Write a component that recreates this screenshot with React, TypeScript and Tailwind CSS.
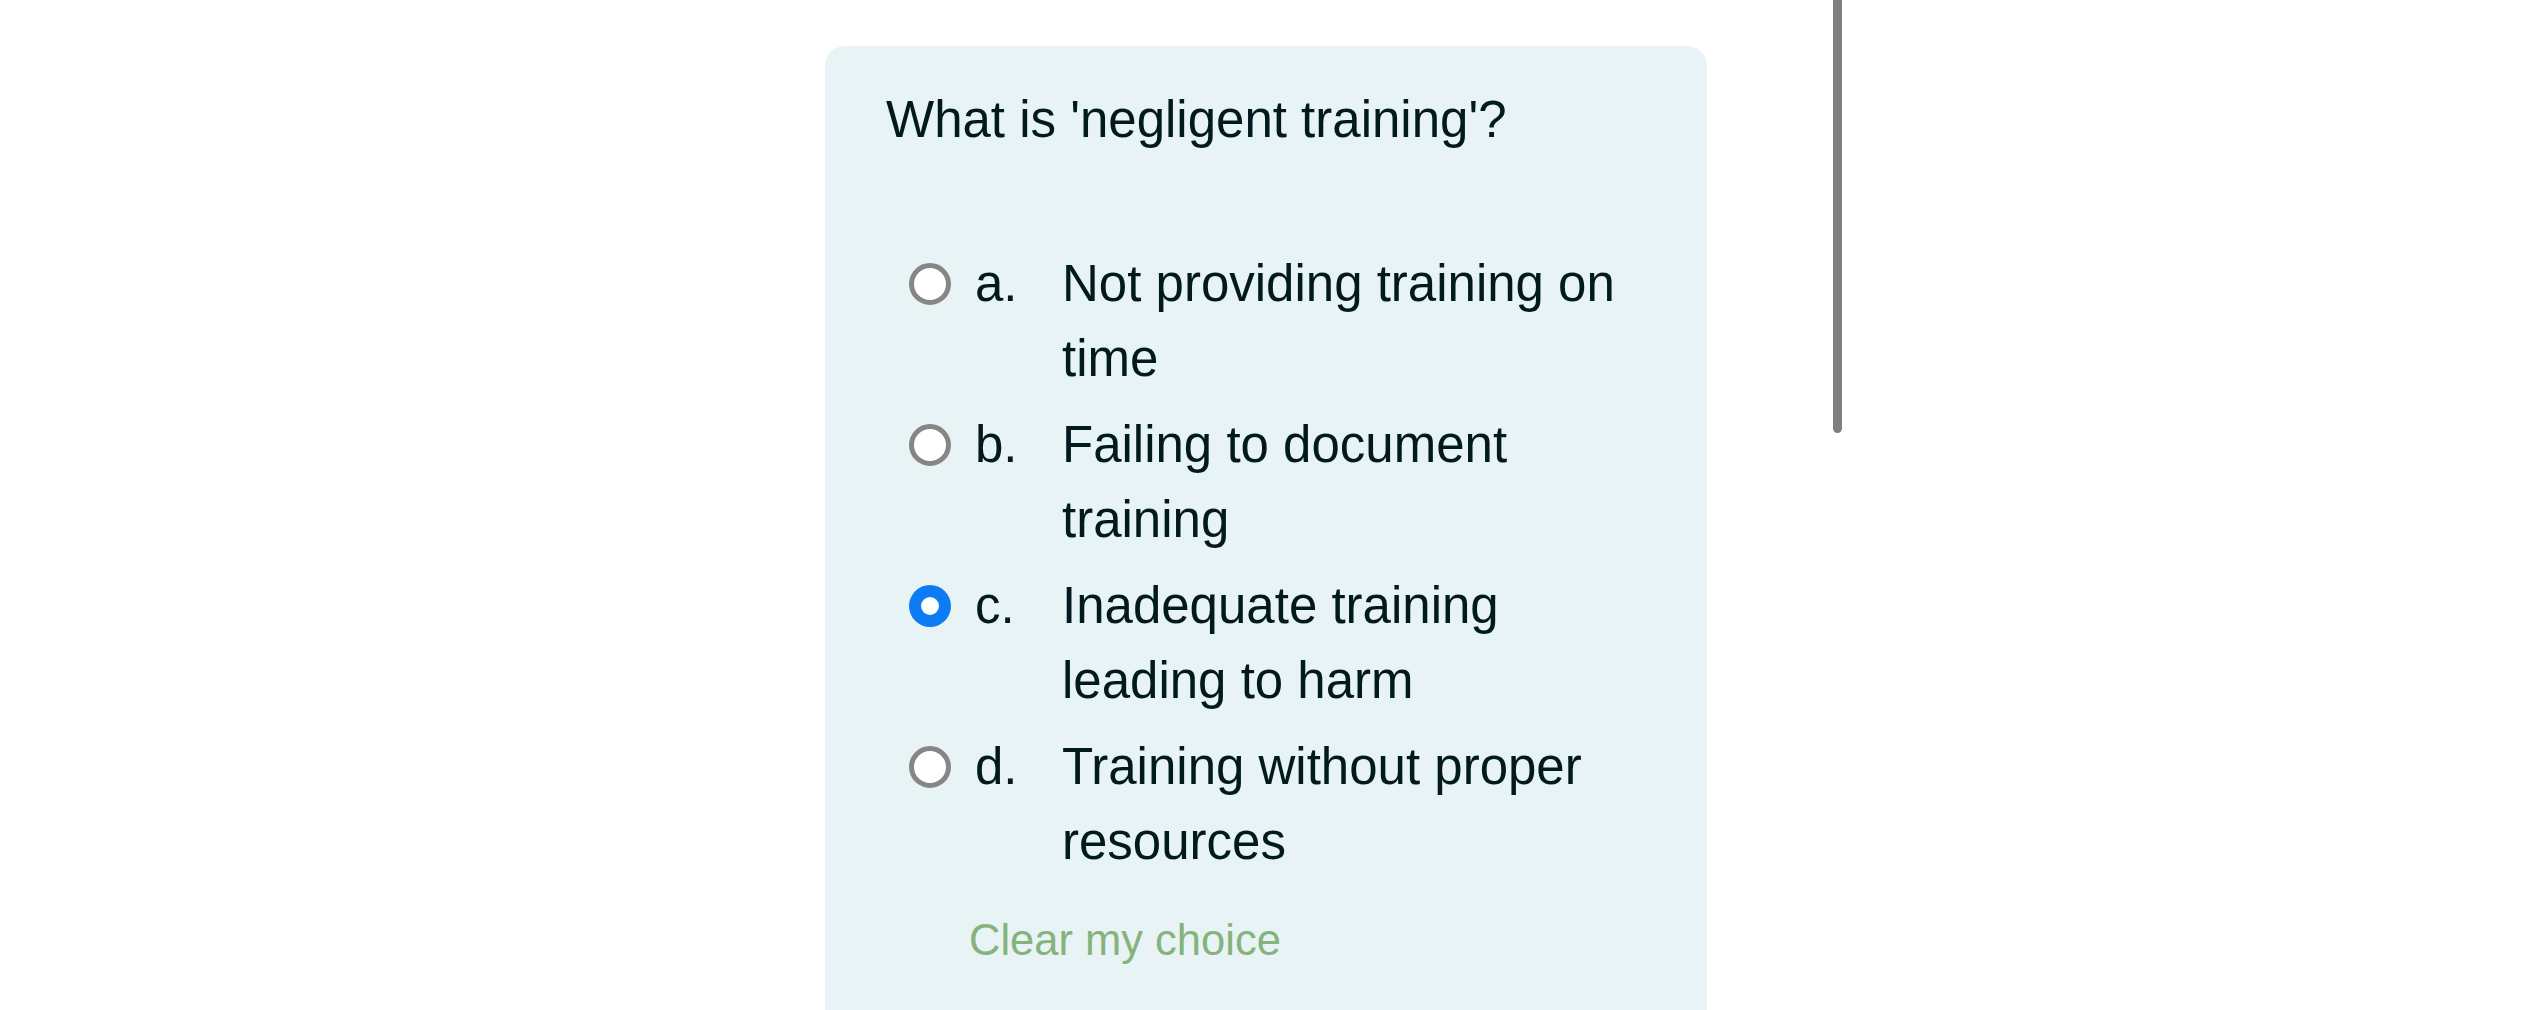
import React from "react";

type Opt = { n: string; text: string; checked?: boolean };

const options: Opt[] = [
  { n: "a.", text: "Not providing training on time" },
  { n: "b.", text: "Failing to document training" },
  { n: "c.", text: "Inadequate training leading to harm", checked: true },
  { n: "d.", text: "Training without proper resources" },
];

function Radio({ checked }: { checked?: boolean }) {
  if (checked) {
    return (
      <div className="mt-[17px] flex h-[42px] w-[42px] shrink-0 items-center justify-center rounded-full bg-[#0d7bf4]">
        <div className="h-[18px] w-[18px] rounded-full bg-white" />
      </div>
    );
  }
  return (
    <div className="mt-[17px] h-[42px] w-[42px] shrink-0 rounded-full border-[5px] border-[#868686] bg-white" />
  );
}

export default function App() {
  return (
    <div
      className="relative h-[1010px] w-full overflow-hidden bg-white text-[#001a1e]"
      style={{ fontFamily: '"Liberation Sans", Arial, sans-serif' }}
    >
      <div className="ml-[825px] mt-[46px] w-[882px] rounded-[20px] bg-[#e7f3f5] px-[61px] pb-[200px] pt-[36px]">
        <div className="text-[51px] leading-[75px]">What is 'negligent training'?</div>
        <div className="ml-[23px] mt-[89px] flex flex-col gap-[11px]">
          {options.map((o) => (
            <div key={o.n} className="flex items-start text-[51px] leading-[75px]">
              <Radio checked={o.checked} />
              <span className="ml-[24px] w-[87px] shrink-0">{o.n}</span>
              <span className="min-w-0 flex-1">{o.text}</span>
            </div>
          ))}
        </div>
        <div className="ml-[83px] mt-[29px] text-[43.5px] leading-[65px] text-[#86b37c]">
          Clear my choice
        </div>
      </div>
      <div className="absolute left-[1833px] top-0 h-[433px] w-[9px] rounded-b-full bg-[#808080]" />
    </div>
  );
}
